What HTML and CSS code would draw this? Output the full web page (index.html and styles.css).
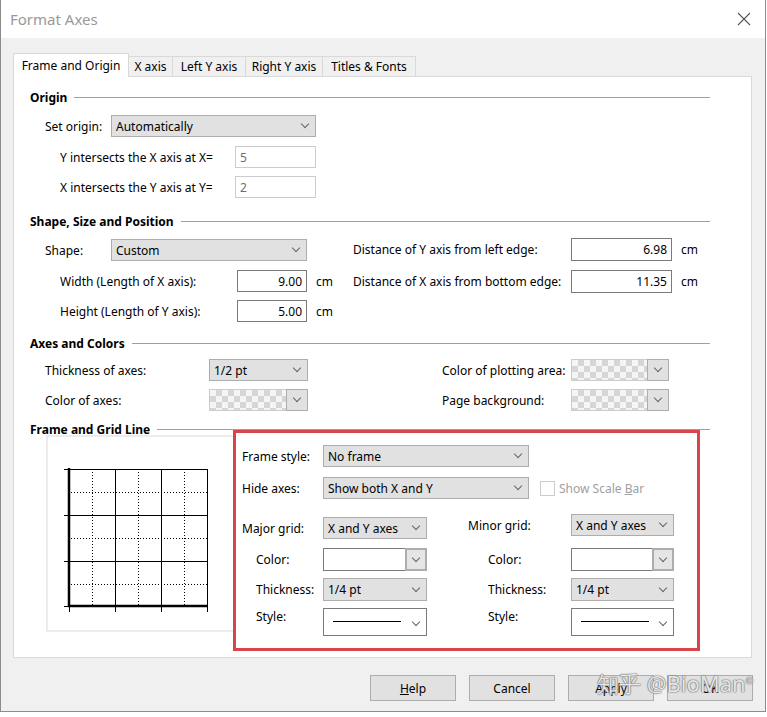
FILE: index.html
```html
<!DOCTYPE html>
<html>
<head>
	<title>Format Axes</title>
	<link rel="stylesheet" href="styles.css">
</head>
<body>
	<div class="dialog">
		<!-- window title -->
		<div class="titlebar">
			<span class="title">Format Axes</span>
			<svg class="close" width="14" height="14" viewBox="0 0 14 14">
				<path d="M1 1 L13 13 M13 1 L1 13" stroke="#555" stroke-width="1.1" fill="none"/>
			</svg>
		</div>
		<div class="body">
			<!-- tab strip -->
			<div class="tabs">
				<div class="tab active t1">Frame and Origin</div>
				<div class="tab t2">X axis</div>
				<div class="tab t3">Left Y axis</div>
				<div class="tab t4">Right Y axis</div>
				<div class="tab t5">Titles &amp; Fonts</div>
			</div>
			<div class="panel">
				<!-- Origin -->
				<div class="heading">Origin</div>
				<div class="row m10 in15">
					<span class="lbl w66">Set origin:</span>
					<div class="select w205"><span>Automatically</span><i class="chev"></i></div>
				</div>
				<div class="row m9 in30">
					<span class="lbl w175">Y intersects the X axis at X=</span>
					<div class="input disabled w81">5</div>
				</div>
				<div class="row m8 in30">
					<span class="lbl w175">X intersects the Y axis at Y=</span>
					<div class="input disabled w81">2</div>
				</div>

				<!-- Shape, Size and Position -->
				<div class="heading m15">Shape, Size and Position</div>
				<div class="cols">
					<div class="col w323">
						<div class="row m10 in15">
							<span class="lbl w66">Shape:</span>
							<div class="select w196"><span>Custom</span><i class="chev"></i></div>
						</div>
						<div class="row m9 in30">
							<span class="lbl w177">Width (Length of X axis):</span>
							<div class="input num w70">9.00</div>
							<span class="unit">cm</span>
						</div>
						<div class="row m8 in30">
							<span class="lbl w177">Height (Length of Y axis):</span>
							<div class="input num w70">5.00</div>
							<span class="unit">cm</span>
						</div>
					</div>
					<div class="col">
						<div class="row m9 tall">
							<span class="lbl w218">Distance of Y axis from left edge:</span>
							<div class="input num w101">6.98</div>
							<span class="unit">cm</span>
						</div>
						<div class="row m9 tall">
							<span class="lbl w218">Distance of X axis from bottom edge:</span>
							<div class="input num w101">11.35</div>
							<span class="unit">cm</span>
						</div>
					</div>
				</div>

				<!-- Axes and Colors -->
				<div class="heading m13">Axes and Colors</div>
				<div class="cols">
					<div class="col w412">
						<div class="row m8 in15">
							<span class="lbl w164">Thickness of axes:</span>
							<div class="select w99"><span>1/2 pt</span><i class="chev"></i></div>
						</div>
						<div class="row m8 in15">
							<span class="lbl w164">Color of axes:</span>
							<div class="picker w99"><span class="swatch checker"></span><span class="drop"><i class="chev"></i></span></div>
						</div>
					</div>
					<div class="col">
						<div class="row m8">
							<span class="lbl w129">Color of plotting area:</span>
							<div class="picker w98"><span class="swatch checker"></span><span class="drop"><i class="chev"></i></span></div>
						</div>
						<div class="row m8">
							<span class="lbl w129">Page background:</span>
							<div class="picker w98"><span class="swatch checker"></span><span class="drop"><i class="chev"></i></span></div>
						</div>
					</div>
				</div>

				<!-- Frame and Grid Line -->
				<div class="heading m10">Frame and Grid Line</div>
				<div class="frame">
					<div class="preview">
						<svg width="150" height="150" viewBox="0 0 150 150">
							<!-- minor grid -->
							<g stroke="#000" stroke-width="1" stroke-dasharray="1 2">
								<path d="M28.5 4 V141 M74.5 4 V141 M120.5 4 V141"/>
								<path d="M4 27.5 H143 M4 73.5 H143 M4 119.5 H143"/>
							</g>
							<!-- major grid -->
							<g stroke="#000" stroke-width="1">
								<path d="M51.5 4 V141 M97.5 4 V141 M143.5 4 V141"/>
								<path d="M4 4.5 H143 M4 50.5 H143 M4 96.5 H143"/>
							</g>
							<!-- axes and ticks -->
							<g stroke="#000" stroke-width="2.5">
								<path d="M5 3 V142 M4 141 H144"/>
							</g>
							<g stroke="#000" stroke-width="1">
								<path d="M0 4.5 H5 M0 50.5 H5 M0 96.5 H5 M0 141.5 H5"/>
								<path d="M5.5 141 V147 M51.5 141 V147 M97.5 141 V147 M143.5 141 V147"/>
							</g>
						</svg>
					</div>
					<div class="controls">
						<div class="row">
							<span class="lbl w81">Frame style:</span>
							<div class="select w206"><span>No frame</span><i class="chev"></i></div>
						</div>
						<div class="row m10">
							<span class="lbl w81">Hide axes:</span>
							<div class="select w206"><span>Show both X and Y</span><i class="chev"></i></div>
							<span class="check"></span>
							<span class="check-lbl">Show Scale <u>B</u>ar</span>
						</div>
						<div class="grids">
							<div class="grid-col">
								<div class="row">
									<span class="lbl w81">Major grid:</span>
									<div class="select w104"><span>X and Y axes</span><i class="chev"></i></div>
								</div>
								<div class="row tall m9 in14">
									<span class="lbl w67">Color:</span>
									<div class="picker white w104"><span class="swatch"></span><span class="drop"><i class="chev"></i></span></div>
								</div>
								<div class="row tall m7 in14">
									<span class="lbl w67">Thickness:</span>
									<div class="select w104"><span>1/4 pt</span><i class="chev"></i></div>
								</div>
								<div class="row m7 in14 top">
									<span class="lbl w67">Style:</span>
									<div class="style w104"><span class="stroke"></span><i class="chev"></i></div>
								</div>
							</div>
							<div class="grid-col right">
								<div class="row up">
									<span class="lbl w103">Minor grid:</span>
									<div class="select w103"><span>X and Y axes</span><i class="chev"></i></div>
								</div>
								<div class="row tall m12 in20">
									<span class="lbl w83">Color:</span>
									<div class="picker white w103"><span class="swatch"></span><span class="drop"><i class="chev"></i></span></div>
								</div>
								<div class="row tall m7 in20">
									<span class="lbl w83">Thickness:</span>
									<div class="select w103"><span>1/4 pt</span><i class="chev"></i></div>
								</div>
								<div class="row m7 in20 top">
									<span class="lbl w83">Style:</span>
									<div class="style w103"><span class="stroke"></span><i class="chev"></i></div>
								</div>
							</div>
						</div>
					</div>
				</div>
				<!-- highlight drawn around the grid options -->
				<div class="highlight"></div>
			</div>

			<!-- dialog buttons -->
			<div class="buttons">
				<div class="btn"><u>H</u>elp</div>
				<div class="btn">Cancel</div>
				<div class="btn">Apply</div>
				<div class="btn">OK</div>
			</div>
		</div>
		<div class="watermark">知乎 @BioMan<sup>©</sup></div>
	</div>
</body>
</html>
```

FILE: styles.css
```css
body{
	margin: 0;
	background: #fff;
	font-family: "Noto Sans", "Open Sans", sans-serif;
	font-size: 12px;
	color: #000;
}
.dialog{
	width: 766px;
	height: 712px;
	box-sizing: border-box;
	border-left: 1px solid #8c8c8c;
	border-right: 1px solid #8c8c8c;
	border-bottom: 1px solid #8c8c8c;
	background: #f0f0f0;
	position: relative;
}
.titlebar{
	height: 38px;
	background: #fff;
	display: flex;
	align-items: center;
	justify-content: space-between;
	padding: 0 14px 0 9px;
}
.title{
	font-size: 15px;
	color: #999;
}
.body{
	padding: 15px 0 0 12px;
}

/* tabs */
.tabs{
	display: flex;
	align-items: flex-end;
	height: 24px;
	margin-bottom: -1px;
}
.tab{
	box-sizing: border-box;
	height: 21px;
	border: 1px solid #d9d9d9;
	border-bottom: none;
	background: #f0f0f0;
	display: flex;
	align-items: center;
	justify-content: center;
	margin-left: -1px;
	padding-bottom: 1px;
}
.tab.active{
	height: 24px;
	background: #fff;
	margin-left: 0;
	position: relative;
	z-index: 1;
	padding-bottom: 0;
}
.t1{ width: 116px; }
.t2{ width: 45px; }
.t3{ width: 74px; }
.t4{ width: 78px; }
.t5{ width: 94px; }

.panel{
	width: 739px;
	height: 582px;
	box-sizing: border-box;
	border: 1px solid #d9d9d9;
	background: #fff;
	padding: 12px 41px 0 16px;
	position: relative;
}
.heading{
	display: flex;
	align-items: center;
	height: 16px;
	font-weight: bold;
}
.heading::after{
	content: "";
	flex: 1;
	border-top: 1px solid #a0a0a0;
	margin-left: 7px;
}

/* rows */
.row{
	display: flex;
	align-items: center;
	height: 22px;
}
.row.tall{ height: 23px; }
.row.top{
	align-items: flex-start;
	height: 28px;
}
.row.top .lbl{
	line-height: 16px;
	padding-top: 1px;
}
.m7{ margin-top: 7px; }
.m8{ margin-top: 8px; }
.m9{ margin-top: 9px; }
.m10{ margin-top: 10px; }
.m12{ margin-top: 12px; }
.m13{ margin-top: 13px; }
.m15{ margin-top: 15px; }
.in14{ padding-left: 14px; }
.in15{ padding-left: 15px; }
.in20{ padding-left: 20px; }
.in30{ padding-left: 30px; }
.cols{
	display: flex;
}
.lbl{
	flex-shrink: 0;
	white-space: nowrap;
}
.w66{ width: 66px; }
.w67{ width: 67px; }
.w70{ width: 70px; }
.w81{ width: 81px; }
.w83{ width: 83px; }
.w98{ width: 98px; }
.w99{ width: 99px; }
.w101{ width: 101px; }
.w103{ width: 103px; }
.w104{ width: 104px; }
.w129{ width: 129px; }
.w164{ width: 164px; }
.w175{ width: 175px; }
.w177{ width: 177px; }
.w196{ width: 196px; }
.w205{ width: 205px; }
.w206{ width: 206px; }
.w218{ width: 218px; }
.w323{ width: 323px; }
.w412{ width: 412px; }

/* controls */
.select{
	box-sizing: border-box;
	height: 100%;
	background: #e1e1e1;
	border: 1px solid #adadad;
	display: flex;
	align-items: center;
	justify-content: space-between;
	padding: 0 7px 0 4px;
	flex-shrink: 0;
}
.chev{
	display: block;
	width: 5px;
	height: 5px;
	border-right: 1px solid #666;
	border-bottom: 1px solid #666;
	transform: translateY(-2px) rotate(45deg);
}
.input{
	box-sizing: border-box;
	height: 100%;
	border: 1px solid #7a7a7a;
	background: #fff;
	display: flex;
	align-items: center;
	padding: 0 4px;
	flex-shrink: 0;
}
.input.disabled{
	border-color: #cccccc;
	color: #6d6d6d;
}
.input.num{
	justify-content: flex-end;
}
.unit{
	margin-left: 9px;
}
.picker{
	box-sizing: border-box;
	height: 100%;
	display: flex;
	flex-shrink: 0;
}
.swatch{
	flex: 1;
	border: 1px solid #cccccc;
	border-right: none;
}
.checker{
	background: repeating-conic-gradient(#d6d6d6 0 25%, #f5f5f5 0 50%) 0 0 / 12px 12px;
}
.picker.white .swatch{
	border-color: #7a7a7a;
	background: #fff;
}
.drop{
	box-sizing: border-box;
	width: 22px;
	background: #e1e1e1;
	border: 1px solid #adadad;
	display: flex;
	align-items: center;
	justify-content: center;
}
.picker.white .drop{
	border: 2px solid #adadad;
	background: #e5e5e5;
}

/* frame and grid line */
.frame{
	display: flex;
	margin-top: -2px;
	padding-left: 16px;
}
.preview{
	box-sizing: border-box;
	width: 190px;
	height: 197px;
	border: 2px solid #ececec;
	padding: 28px 0 0 16px;
	flex-shrink: 0;
}
.preview svg{
	display: block;
}
.controls{
	margin-left: 6px;
	padding-top: 10px;
}
.check{
	box-sizing: border-box;
	width: 15px;
	height: 15px;
	border: 1px solid #cccccc;
	margin-left: 11px;
	background: #fff;
}
.check-lbl{
	color: #a0a0a0;
	margin-left: 4px;
}
.grids{
	display: flex;
	margin-top: 18px;
}
.grid-col.right{
	margin-left: 41px;
}
.row.up{
	margin-top: -3px;
}
.style{
	box-sizing: border-box;
	height: 28px;
	border: 1px solid #7a7a7a;
	background: #fff;
	display: flex;
	align-items: center;
	justify-content: space-between;
	padding: 0 7px 0 9px;
}
.stroke{
	width: 68px;
	border-top: 1px solid #000;
	margin-top: -1px;
}
.style .chev{
	margin-top: 4px;
}
.highlight{
	position: absolute;
	left: 219px;
	top: 353px;
	width: 467px;
	height: 221px;
	box-sizing: border-box;
	border: 3px solid #d9444b;
	pointer-events: none;
}

/* buttons */
.buttons{
	display: flex;
	justify-content: flex-end;
	gap: 13px;
	margin-top: 17px;
	padding-right: 12px;
}
.btn{
	box-sizing: border-box;
	width: 86px;
	height: 26px;
	background: #e1e1e1;
	border: 1px solid #adadad;
	display: flex;
	align-items: center;
	justify-content: center;
}
.watermark{
	position: absolute;
	left: 596px;
	top: 668px;
	font-size: 22px;
	color: rgba(255, 255, 255, 0.85);
	text-shadow: 0 0 1px #666, 0 0 1px #666, 0 0 2px #999;
	white-space: nowrap;
	pointer-events: none;
}
.watermark sup{
	font-size: 9px;
}
```
